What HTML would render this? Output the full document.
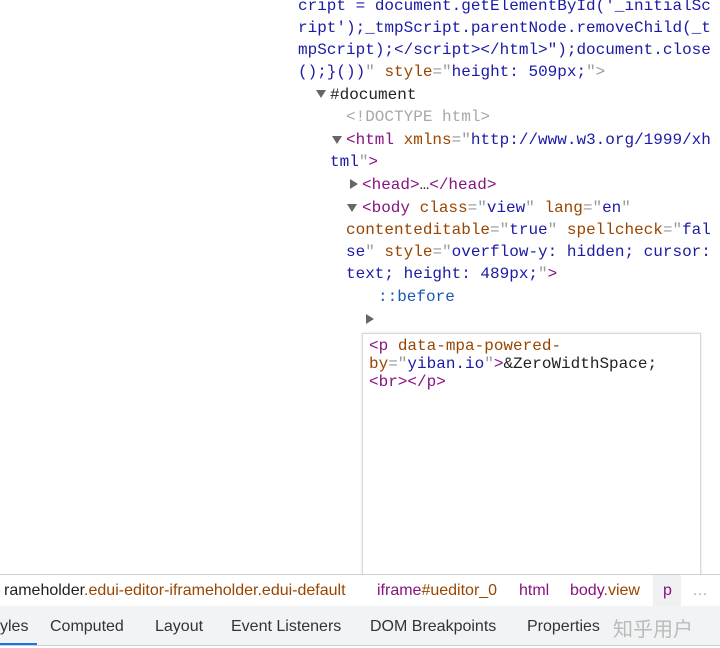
<!DOCTYPE html>
<html><head><style>
body{margin:0;width:720px;height:648px;overflow:hidden;background:#fff;position:relative;font-family:"Liberation Mono",monospace;}
.l{position:absolute;white-space:pre;font-size:16px;line-height:20px;color:#1a1aa6;}
.t{color:#881280}.a{color:#994500}.v{color:#1a1aa6}.g{color:#a8a8a8}.k{color:#222}.p{color:#999}
.tri{position:absolute;width:0;height:0;}
.down{border-left:5px solid transparent;border-right:5px solid transparent;border-top:8px solid #666;}
.right{border-top:5px solid transparent;border-bottom:5px solid transparent;border-left:8px solid #666;}
#box{position:absolute;left:362px;top:333px;width:337px;height:241px;border:1px solid #d6d6d6;border-bottom:none;background:#fff;box-shadow:0 0 3px rgba(0,0,0,.12);}
#box .l{font-size:16px;line-height:18px;}
#bc{position:absolute;left:0;top:574px;width:720px;height:31px;border-top:1px solid #d0d0d0;border-bottom:1px solid #d0d0d0;background:#fff;font-family:"Liberation Sans",sans-serif;font-size:16px;}
#bc>span{position:absolute;top:7px;white-space:pre}
#tabs{position:absolute;left:0;top:606px;width:720px;height:39px;background:#f1f3f4;border-bottom:1px solid #d0d0d0;font-family:"Liberation Sans","Noto Sans CJK SC",sans-serif;font-size:16px;color:#333;}
#tabs>span{position:absolute;top:12px;white-space:pre}
</style></head><body>
<div class="l" style="left:298px;top:-4px">cript = document.getElementById('_initialSc</div>
<div class="l" style="left:298px;top:18px">ript');_tmpScript.parentNode.removeChild(_t</div>
<div class="l" style="left:298px;top:40px">mpScript);&lt;/script&gt;&lt;/html&gt;");document.close</div>
<div class="l" style="left:298px;top:62px">();}())<span class="p">"</span> <span class="a">style</span><span class="p">="</span>height: 509px;<span class="p">"&gt;</span></div>
<div class="tri down" style="left:316px;top:90px"></div>
<div class="l k" style="left:330px;top:85px">#document</div>
<div class="l g" style="left:346px;top:107px">&lt;!DOCTYPE html&gt;</div>
<div class="tri down" style="left:332px;top:136px"></div>
<div class="l" style="left:346px;top:130px"><span class="t">&lt;html</span> <span class="a">xmlns</span><span class="p">="</span>http://www.w3.org/1999/xh</div>
<div class="l" style="left:330px;top:152px">tml<span class="p">"</span><span class="t">&gt;</span></div>
<div class="tri right" style="left:350px;top:179px"></div>
<div class="l" style="left:362px;top:175px"><span class="t">&lt;head&gt;</span><span class="k">…</span><span class="t">&lt;/head&gt;</span></div>
<div class="tri down" style="left:347px;top:204px"></div>
<div class="l" style="left:362px;top:198px"><span class="t">&lt;body</span> <span class="a">class</span><span class="p">="</span>view<span class="p">"</span> <span class="a">lang</span><span class="p">="</span>en<span class="p">"</span></div>
<div class="l" style="left:346px;top:220px"><span class="a">contenteditable</span><span class="p">="</span>true<span class="p">"</span> <span class="a">spellcheck</span><span class="p">="</span>fal</div>
<div class="l" style="left:346px;top:242px">se<span class="p">"</span> <span class="a">style</span><span class="p">="</span>overflow-y: hidden; cursor:</div>
<div class="l" style="left:346px;top:264px">text; height: 489px;<span class="p">"</span><span class="t">&gt;</span></div>
<div class="l" style="left:378px;top:287px;color:#1a58b3">::before</div>
<div class="tri right" style="left:366px;top:314px"></div>
<div id="box">
<div class="l" style="left:6px;top:3px"><span class="t">&lt;p</span> <span class="a">data-mpa-powered-</span></div>
<div class="l" style="left:6px;top:21px"><span class="a">by</span><span class="p">="</span>yiban.io<span class="p">"</span><span class="t">&gt;</span><span class="k">&amp;ZeroWidthSpace;</span></div>
<div class="l" style="left:6px;top:39px"><span class="t">&lt;br&gt;&lt;/p&gt;</span></div>
</div>
<div id="bc">
<span style="left:4px;color:#222">rameholder<span style="color:#994500">.edui-editor-iframeholder.edui-default</span></span>
<span style="left:377px;color:#881280">iframe<span style="color:#994500">#ueditor_0</span></span>
<span style="left:519px;color:#881280">html</span>
<span style="left:570px;color:#881280">body<span style="color:#994500">.view</span></span>
<span style="left:653px;top:0;width:28px;height:31px;background:#eef0f2"></span>
<span style="left:663px;color:#881280">p</span>
<span style="left:692px;color:#aaa">…</span>
</div>
<div id="tabs">
<span style="left:0">yles</span>
<span style="left:0;top:37px;width:37px;height:2px;background:#1a73e8"></span>
<span style="left:50px">Computed</span>
<span style="left:155px">Layout</span>
<span style="left:231px">Event Listeners</span>
<span style="left:370px">DOM Breakpoints</span>
<span style="left:527px">Properties</span>
<span style="left:613px;top:7px;color:#bbb;font-size:20px">知乎用户</span>
</div>
</body></html>
